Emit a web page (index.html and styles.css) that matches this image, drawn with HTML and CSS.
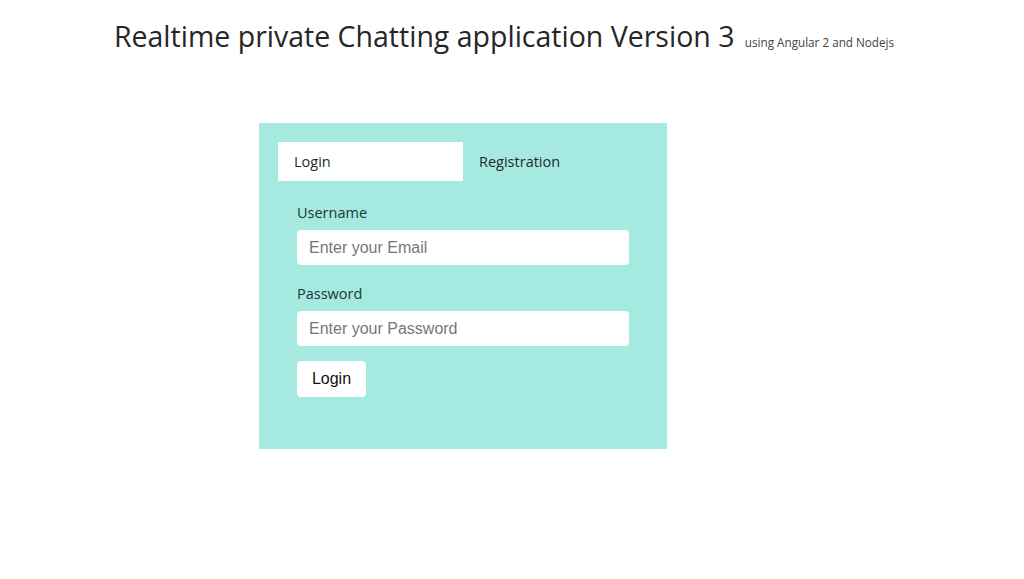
FILE: index.html
```html
<!DOCTYPE html>
<html>
<head>
    <meta charset="UTF-8">
    <title>Realtime private Chatting application</title>
    <link rel="stylesheet" href="styles.css">
</head>
<body>
    <h1 class="title">Realtime private Chatting application Version 3 <small>using Angular 2 and Nodejs</small></h1>

    <div class="panel">
        <div class="tabs">
            <div class="tab active">Login</div>
            <div class="tab">Registration</div>
        </div>
        <form class="login-form" onsubmit="return false">
            <label for="username">Username</label>
            <input id="username" type="text" placeholder="Enter your Email">
            <label for="password">Password</label>
            <input id="password" type="password" placeholder="Enter your Password">
            <button type="submit" class="login-button">Login</button>
        </form>
    </div>
</body>
</html>
```

FILE: styles.css
```css
body {
    font-family: "Open Sans", "Noto Sans", sans-serif;
    background-color: #ffffff;
    color: #222222;
    margin: 0;
}

.title {
    margin: 0;
    padding: 17px 16px 0 0;
    text-align: center;
    font-size: 28.5px;
    font-weight: normal;
    color: #262626;
}

.title small {
    font-size: 11.7px;
    color: #444444;
    margin-left: 3px;
}

.panel {
    width: 408px;
    height: 326px;
    box-sizing: border-box;
    margin: 68px 0 0 259px;
    padding: 19px 19px;
    background-color: #a6e9e0;
}

.tabs {
    display: flex;
}

.tab {
    width: 185px;
    height: 39px;
    box-sizing: border-box;
    padding: 0 16px;
    line-height: 39px;
    font-size: 14.5px;
    color: #1f2b2a;
}

.tab.active {
    background-color: #ffffff;
}

.login-form {
    display: flex;
    flex-direction: column;
    align-items: flex-start;
    padding: 22px 19px 0 19px;
}

.login-form label {
    font-size: 14.5px;
    color: #163a34;
    margin-bottom: 8px;
}

.login-form input {
    width: 332px;
    height: 35px;
    box-sizing: border-box;
    border: none;
    border-radius: 4px;
    padding: 0 12px;
    margin-bottom: 19px;
    font-family: "Liberation Sans", Arial, sans-serif;
    font-size: 16px;
    background-color: #ffffff;
}

.login-form input::placeholder {
    color: #777777;
}

.login-form input:last-of-type {
    margin-bottom: 15px;
}

.login-button {
    width: 69px;
    height: 36px;
    border: none;
    border-radius: 4px;
    background-color: #ffffff;
    color: #111111;
    font-family: "Liberation Sans", Arial, sans-serif;
    font-size: 16px;
    cursor: pointer;
}
```
